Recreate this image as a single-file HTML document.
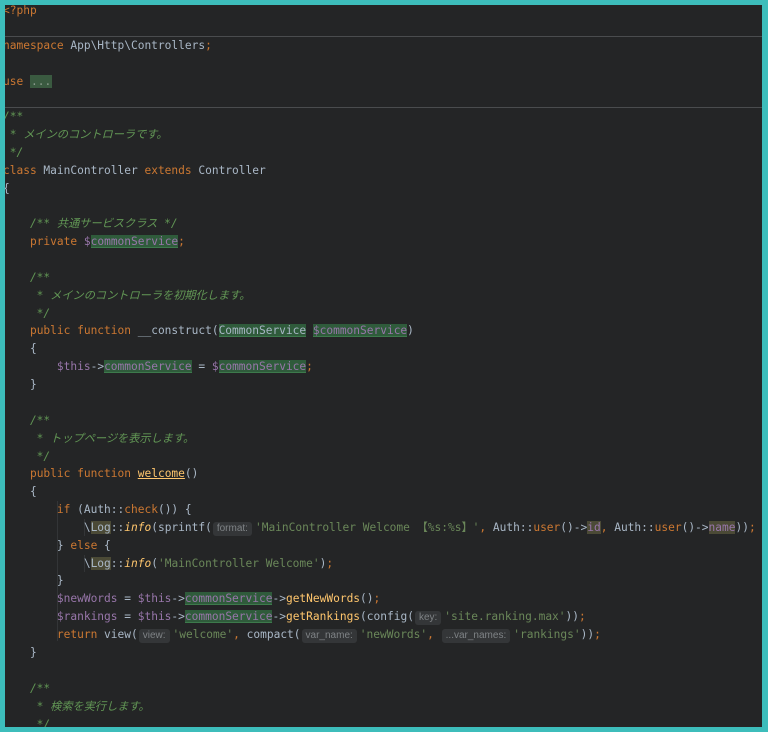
<!DOCTYPE html>
<html><head><meta charset="utf-8"><style>
html,body{margin:0;padding:0}
body{width:768px;height:732px;background:#3dbdbb;position:relative;overflow:hidden}
#ed{position:absolute;left:5px;top:5px;width:757px;height:722px;background:#242526;overflow:hidden}
#in{position:absolute;left:0;top:1px;width:757px;height:722px}
.l{position:absolute;left:-2px;height:18px;line-height:18px;white-space:pre;font-family:"DejaVu Sans Mono","Liberation Mono","Noto Sans CJK JP",monospace;font-size:11.2px;color:#a9b7c6}
.k{color:#cc7832}.c{color:#629755;font-style:italic}.s{color:#6a8759}.v{color:#9876aa}.f{color:#ffc66d}
.g{background:#2f5b3b;box-shadow:inset 0 -1px 0 #3d7a4c}
.o{background:#4b4a36}
.h{display:inline-block;font-family:"Liberation Sans",sans-serif;font-size:10px;color:#7f8386;background:#343638;border-radius:3px;padding:0 4px;line-height:14px;margin:0 3px 0 1px;font-style:normal}
.sep{position:absolute;left:0;right:0;height:1px;background:#4a4c4e}
.ig{position:absolute;width:1px;background:#333537}
</style></head><body><div id="ed">
<div class="sep" style="top:31px"></div>
<div class="sep" style="top:102px"></div>
<div id="in">
<div class="ig" style="left:52px;top:495px;height:140px"></div>
<div class="ig" style="left:79px;top:513px;height:17px"></div>
<div class="ig" style="left:79px;top:549px;height:17px"></div>
<div class="l" style="top:-4px"><span class="k">&lt;?php</span></div>
<div class="l" style="top:31px"><span class="k">namespace</span> App\Http\Controllers<span class="k">;</span></div>
<div class="l" style="top:67px"><span class="k">use</span> <span style="background:#3a5a40;color:#8a9a8c;padding:0 1px">...</span></div>
<div class="l" style="top:102px"><span class="c">/**</span></div>
<div class="l" style="top:120px"><span class="c"> * メインのコントローラです。</span></div>
<div class="l" style="top:138px"><span class="c"> */</span></div>
<div class="l" style="top:156px"><span class="k">class</span> MainController <span class="k">extends</span> Controller</div>
<div class="l" style="top:174px">{</div>
<div class="l" style="top:209px"><span class="c">    /** 共通サービスクラス */</span></div>
<div class="l" style="top:227px">    <span class="k">private</span> <span class="v">$<span class="g">commonService</span></span><span class="k">;</span></div>
<div class="l" style="top:263px"><span class="c">    /**</span></div>
<div class="l" style="top:281px"><span class="c">     * メインのコントローラを初期化します。</span></div>
<div class="l" style="top:299px"><span class="c">     */</span></div>
<div class="l" style="top:316px">    <span class="k">public function</span> __construct(<span class="g">CommonService</span> <span class="v g">$commonService</span>)</div>
<div class="l" style="top:334px">    {</div>
<div class="l" style="top:352px">        <span class="v">$this</span>-&gt;<span class="v g">commonService</span> = <span class="v">$<span class="g">commonService</span></span><span class="k">;</span></div>
<div class="l" style="top:370px">    }</div>
<div class="l" style="top:406px"><span class="c">    /**</span></div>
<div class="l" style="top:424px"><span class="c">     * トップページを表示します。</span></div>
<div class="l" style="top:442px"><span class="c">     */</span></div>
<div class="l" style="top:459px">    <span class="k">public function</span> <span class="f" style="text-decoration:underline">welcome</span>()</div>
<div class="l" style="top:477px">    {</div>
<div class="l" style="top:495px">        <span class="k">if</span> (Auth::<span class="k">check</span>()) {</div>
<div class="l" style="top:513px">            \<span class="o">Log</span>::<span class="f" style="font-style:italic">info</span>(sprintf(<span class="h">format:</span><span class="s">'MainController Welcome 【%s:%s】'</span><span class="k">,</span> Auth::<span class="k">user</span>()-&gt;<span class="v o">id</span><span class="k">,</span> Auth::<span class="k">user</span>()-&gt;<span class="v o">name</span>))<span class="k">;</span></div>
<div class="l" style="top:531px">        } <span class="k">else</span> {</div>
<div class="l" style="top:549px">            \<span class="o">Log</span>::<span class="f" style="font-style:italic">info</span>(<span class="s">'MainController Welcome'</span>)<span class="k">;</span></div>
<div class="l" style="top:566px">        }</div>
<div class="l" style="top:584px">        <span class="v">$newWords</span> = <span class="v">$this</span>-&gt;<span class="v g">commonService</span>-&gt;<span class="f">getNewWords</span>()<span class="k">;</span></div>
<div class="l" style="top:602px">        <span class="v">$rankings</span> = <span class="v">$this</span>-&gt;<span class="v g">commonService</span>-&gt;<span class="f">getRankings</span>(config(<span class="h">key:</span><span class="s">'site.ranking.max'</span>))<span class="k">;</span></div>
<div class="l" style="top:620px">        <span class="k">return</span> view(<span class="h">view:</span><span class="s">'welcome'</span><span class="k">,</span> compact(<span class="h">var_name:</span><span class="s">'newWords'</span><span class="k">,</span> <span class="h">...var_names:</span><span class="s">'rankings'</span>))<span class="k">;</span></div>
<div class="l" style="top:638px">    }</div>
<div class="l" style="top:674px"><span class="c">    /**</span></div>
<div class="l" style="top:692px"><span class="c">     * 検索を実行します。</span></div>
<div class="l" style="top:710px"><span class="c">     */</span></div>
</div>
</div></body></html>
